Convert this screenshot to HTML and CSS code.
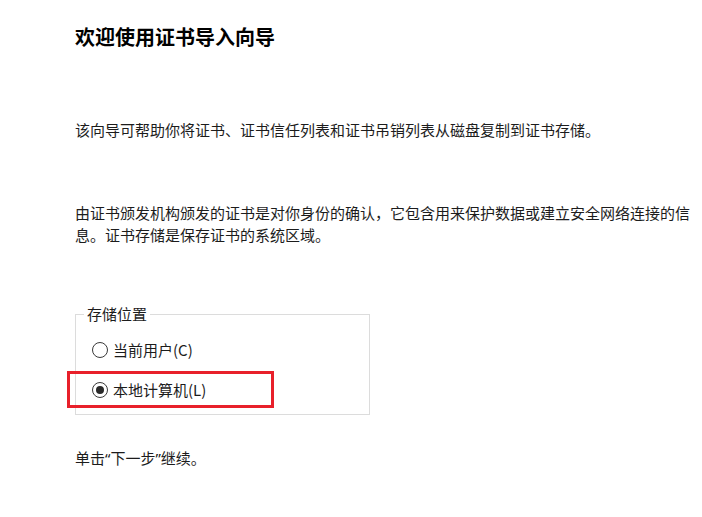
FILE: index.html
```html
<!DOCTYPE html>
<html lang="zh-CN">
<head>
  <meta charset="UTF-8">
  <title>证书导入向导</title>
  <link rel="stylesheet" href="styles.css">
</head>
<body>
  <div class="wizard">
    <h1>欢迎使用证书导入向导</h1>

    <p class="intro">该向导可帮助你将证书、证书信任列表和证书吊销列表从磁盘复制到证书存储。</p>

    <p class="info">由证书颁发机构颁发的证书是对你身份的确认，它包含用来保护数据或建立安全网络连接的信息。证书存储是保存证书的系统区域。</p>

    <fieldset class="store">
      <legend>存储位置</legend>
      <label class="option">
        <span class="radio"></span>
        <span>当前用户(C)</span>
      </label>
      <label class="option selected">
        <span class="radio checked"></span>
        <span>本地计算机(L)</span>
        <span class="mark"></span>
      </label>
    </fieldset>

    <p class="next">单击<span class="q">“</span>下一步<span class="q">”</span>继续。</p>
  </div>
</body>
</html>
```

FILE: styles.css
```css
/* Base */
* { box-sizing: border-box; }
body {
  margin: 0;
  background: #fff;
  color: #1c1c1c;
  font-family: "Noto Sans CJK SC", "Noto Sans", sans-serif;
  font-size: 15px;
  line-height: 22px;
}

.wizard {
  width: 702px;
  padding: 23px 0 0 75px;
}

h1 {
  margin: 0;
  font-size: 20px;
  line-height: 28px;
  font-weight: 700;
  color: #000;
}

p { margin: 0; }
.intro { margin-top: 68px; }
.info { margin-top: 61px; width: 620px; }

/* Store location group */
.store {
  margin: 57px 0 0 0;
  width: 295px;
  padding: 5px 0 4px 8px;
  border: 1px solid #dcdcdc;
}
.store legend {
  padding: 0 3px;
  line-height: 22px;
}

.option {
  position: relative;
  display: flex;
  align-items: center;
  gap: 5px;
  height: 40px;
  padding-left: 8px;
}

.radio {
  width: 16px;
  height: 16px;
  border: 1.5px solid #3a3a3a;
  border-radius: 50%;
  display: flex;
  align-items: center;
  justify-content: center;
}
.radio.checked::after {
  content: "";
  width: 8px;
  height: 8px;
  border-radius: 50%;
  background: #2a2a2a;
}

/* red highlight drawn over the second option */
.mark {
  position: absolute;
  left: -17px;
  top: 1px;
  width: 207px;
  height: 37px;
  border: 3px solid #e8202a;
}

.next { margin-top: 32px; }
.next .q { font-family: "Noto Sans", sans-serif; }
```
